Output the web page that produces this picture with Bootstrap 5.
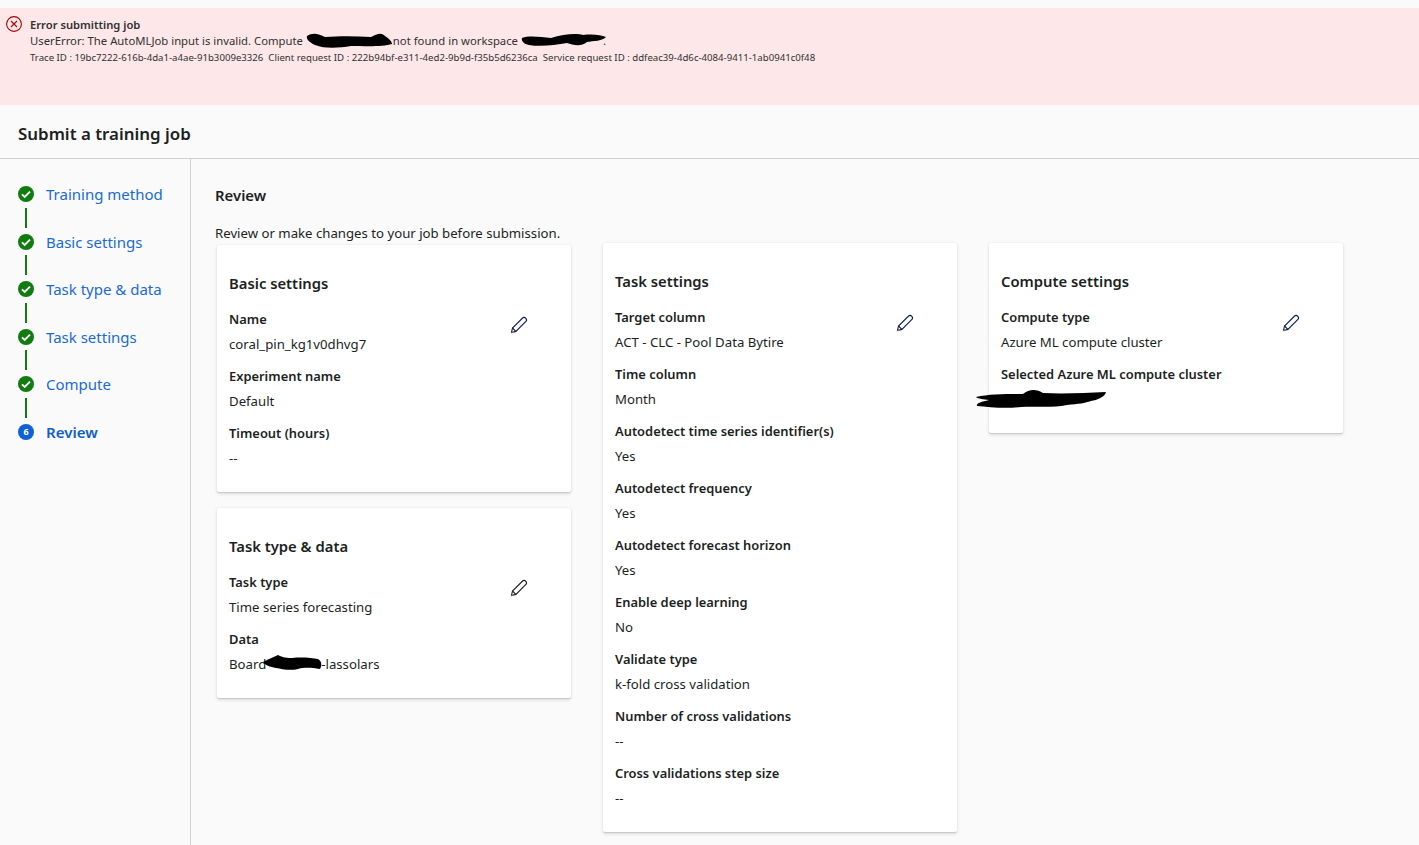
<!DOCTYPE html>
<html lang="en">
<head>
<meta charset="utf-8">
<title>Submit a training job</title>
<link href="https://cdn.jsdelivr.net/npm/bootstrap@5.3.0/dist/css/bootstrap.min.css" rel="stylesheet">
<style>
html,body{height:100%;overflow:hidden}
body{font-family:"Noto Sans","Open Sans",sans-serif;background:#fafafa;color:#201f1e;font-size:13.2px;line-height:20px}
.shell{height:845px;padding-top:8px}
.errbar{background:#fde7e9;height:97px;padding:9px 6px 0;gap:8px}
.errbar svg{flex:none}
.errbar>svg{margin-top:-1px}
.errtitle{font-size:11.2px;font-weight:600;line-height:16px;color:#323130}
.errmsg{font-size:11.3px;line-height:16px;color:#323130}
.errmeta{font-size:9.64px;line-height:18px;color:#323130;white-space:pre}
.scrib{position:relative;display:inline-block;height:1em}
.scrib svg{position:absolute;overflow:visible}
.pagehead{height:54px;border-bottom:1px solid #d2d0ce;padding:0 18px;font-size:16.9px;font-weight:600;color:#201f1e;line-height:57px}
.bodyrow{height:687px}
.stepper{width:191px;flex:none;border-right:1px solid #d2d0ce;padding:23.5px 18px 0}
.steprow{height:23.5px;gap:12px;font-size:15px}
.steprow a{color:#1a6ad4;text-decoration:none}
.steprow a.cur{font-weight:600;color:#0f5fc8;font-size:15.1px}
.stepline{width:2px;height:20px;background:#107c10;margin:2px 0 2px 7px}
.stepdot{width:16px;height:16px;border-radius:50%;background:#0f62d6;color:#fff;font-size:9px;font-weight:700;line-height:16px;text-align:center;flex:none}
.mainpane{padding:26px 24px 0}
.revtitle{font-size:14.9px;font-weight:600;line-height:20px;margin-bottom:18px}
.revtext{line-height:20px;margin-bottom:0}
.colset{gap:32px;padding-left:2px}
.colone{width:354px;gap:16px;margin-top:2px}
.sheet{width:354px;border:0;border-radius:2px;background:#fff;box-shadow:0 1.6px 3.6px rgba(0,0,0,.13),0 .3px .9px rgba(0,0,0,.11);padding:28px 12px 24px;color:#201f1e}
.sheethead{font-size:14.8px;font-weight:600;line-height:20px;margin-bottom:16px}
.fieldset{gap:12px}
.fname{font-weight:600;font-size:12.9px;line-height:20px;margin-bottom:5px}
.fval{line-height:20px;min-height:20px}
.penbox{position:absolute;top:69px;left:293px}
</style>
</head>
<body>
<div class="shell d-flex flex-column">
  <div class="errbar d-flex align-items-start">
    <svg width="16" height="16" viewBox="0 0 16 16" fill="none" stroke="#a80000"><circle cx="8" cy="8" r="7.4" stroke-width="1.1"/><path d="M5 5l6 6M11 5l-6 6" stroke-width="1.1"/></svg>
    <div>
      <div class="errtitle">Error submitting job</div>
      <div class="errmsg">UserError: The AutoMLJob input is invalid. Compute <span class="scrib" style="width:84px"><svg width="88" height="18" viewBox="0 0 88 18" style="left:-1px;top:-3px"><path d="M2 5C8 1 14 3 20 6C34 5 50 5 66 6C72 3 76 1 80 5C84 8 87 10 87 13C78 16 60 15 46 15C34 17 20 18 10 14C4 11 1 8 2 5Z" fill="#000"/></svg></span> not found in workspace <span class="scrib" style="width:82px"><svg width="86" height="16" viewBox="0 0 86 16" style="left:0;top:-2px"><path d="M1 6C8 3 20 5 30 6C42 2 56 1 62 3C72 2 80 3 85 5C82 9 72 9 66 10C60 15 52 13 46 11C34 13 20 15 8 13C3 12 0 9 1 6Z" fill="#000"/></svg></span>.</div>
      <div class="errmeta">Trace ID : 19bc7222-616b-4da1-a4ae-91b3009e3326  Client request ID : 222b94bf-e311-4ed2-9b9d-f35b5d6236ca  Service request ID : ddfeac39-4d6c-4084-9411-1ab0941c0f48</div>
    </div>
  </div>
  <div class="pagehead">Submit a training job</div>
  <div class="bodyrow d-flex">
    <nav class="stepper d-flex flex-column">
      <div class="steprow d-flex align-items-center"><svg width="16" height="16" viewBox="0 0 16 16"><circle cx="8" cy="8" r="8" fill="#107c10"/><path d="M4 8.4l2.7 2.6L12 5.6" fill="none" stroke="#fff" stroke-width="1.9"/></svg><a href="#">Training method</a></div>
      <div class="stepline"></div>
      <div class="steprow d-flex align-items-center"><svg width="16" height="16" viewBox="0 0 16 16"><circle cx="8" cy="8" r="8" fill="#107c10"/><path d="M4 8.4l2.7 2.6L12 5.6" fill="none" stroke="#fff" stroke-width="1.9"/></svg><a href="#">Basic settings</a></div>
      <div class="stepline"></div>
      <div class="steprow d-flex align-items-center"><svg width="16" height="16" viewBox="0 0 16 16"><circle cx="8" cy="8" r="8" fill="#107c10"/><path d="M4 8.4l2.7 2.6L12 5.6" fill="none" stroke="#fff" stroke-width="1.9"/></svg><a href="#">Task type &amp; data</a></div>
      <div class="stepline"></div>
      <div class="steprow d-flex align-items-center"><svg width="16" height="16" viewBox="0 0 16 16"><circle cx="8" cy="8" r="8" fill="#107c10"/><path d="M4 8.4l2.7 2.6L12 5.6" fill="none" stroke="#fff" stroke-width="1.9"/></svg><a href="#">Task settings</a></div>
      <div class="stepline"></div>
      <div class="steprow d-flex align-items-center"><svg width="16" height="16" viewBox="0 0 16 16"><circle cx="8" cy="8" r="8" fill="#107c10"/><path d="M4 8.4l2.7 2.6L12 5.6" fill="none" stroke="#fff" stroke-width="1.9"/></svg><a href="#">Compute</a></div>
      <div class="stepline"></div>
      <div class="steprow d-flex align-items-center"><span class="stepdot">6</span><a href="#" class="cur">Review</a></div>
    </nav>
    <main class="mainpane flex-grow-1">
      <div class="revtitle">Review</div>
      <p class="revtext">Review or make changes to your job before submission.</p>
      <div class="colset d-flex align-items-start">
        <div class="colone d-flex flex-column">
          <section class="card sheet position-relative">
            <div class="sheethead">Basic settings</div>
            <div class="penbox"><svg width="18" height="18" viewBox="0 0 18 18" fill="none" stroke="#0b1f4d" stroke-width="1.1"><path d="M1.5 16.5l1-4.5L12.6 2a2 2 0 0 1 3 0.2l.3.3a2 2 0 0 1 0 2.8L5.9 15.4z"/><path d="M2.5 12l3.4 3.4"/><path d="M1.5 16.5l2-.5" stroke="#d97a1a"/></svg></div>
            <div class="fieldset d-flex flex-column">
              <div><div class="fname">Name</div><div class="fval">coral_pin_kg1v0dhvg7</div></div>
              <div><div class="fname">Experiment name</div><div class="fval">Default</div></div>
              <div><div class="fname">Timeout (hours)</div><div class="fval">--</div></div>
            </div>
          </section>
          <section class="card sheet position-relative">
            <div class="sheethead">Task type &amp; data</div>
            <div class="penbox"><svg width="18" height="18" viewBox="0 0 18 18" fill="none" stroke="#1b1b1b" stroke-width="1.1"><path d="M1.5 16.5l1-4.5L12.6 2a2 2 0 0 1 3 0.2l.3.3a2 2 0 0 1 0 2.8L5.9 15.4z"/><path d="M2.5 12l3.4 3.4"/><path d="M1.5 16.5l2-.5" stroke="#d97a1a"/></svg></div>
            <div class="fieldset d-flex flex-column">
              <div><div class="fname">Task type</div><div class="fval">Time series forecasting</div></div>
              <div><div class="fname">Data</div><div class="fval">Board<span class="scrib" style="width:55px"><svg width="60" height="17" viewBox="0 0 60 17" style="left:-4px;top:-2px"><path d="M1 8C6 5 12 3 16 1C20 3 22 4 30 4C40 3 50 4 56 5C60 7 60 12 58 15C50 14 44 13 36 15C28 17 20 15 14 14C8 13 3 11 1 8Z" fill="#000"/></svg></span>-lassolars</div></div>
            </div>
          </section>
        </div>
        <section class="card sheet position-relative">
          <div class="sheethead">Task settings</div>
          <div class="penbox"><svg width="18" height="18" viewBox="0 0 18 18" fill="none" stroke="#0b1f4d" stroke-width="1.1"><path d="M1.5 16.5l1-4.5L12.6 2a2 2 0 0 1 3 0.2l.3.3a2 2 0 0 1 0 2.8L5.9 15.4z"/><path d="M2.5 12l3.4 3.4"/><path d="M1.5 16.5l2-.5" stroke="#d97a1a"/></svg></div>
          <div class="fieldset d-flex flex-column">
            <div><div class="fname">Target column</div><div class="fval">ACT - CLC - Pool Data Bytire</div></div>
            <div><div class="fname">Time column</div><div class="fval">Month</div></div>
            <div><div class="fname">Autodetect time series identifier(s)</div><div class="fval">Yes</div></div>
            <div><div class="fname">Autodetect frequency</div><div class="fval">Yes</div></div>
            <div><div class="fname">Autodetect forecast horizon</div><div class="fval">Yes</div></div>
            <div><div class="fname">Enable deep learning</div><div class="fval">No</div></div>
            <div><div class="fname">Validate type</div><div class="fval">k-fold cross validation</div></div>
            <div><div class="fname">Number of cross validations</div><div class="fval">--</div></div>
            <div><div class="fname">Cross validations step size</div><div class="fval">--</div></div>
          </div>
        </section>
        <section class="card sheet position-relative">
          <div class="sheethead">Compute settings</div>
          <div class="penbox"><svg width="18" height="18" viewBox="0 0 18 18" fill="none" stroke="#0b1f4d" stroke-width="1.1"><path d="M1.5 16.5l1-4.5L12.6 2a2 2 0 0 1 3 0.2l.3.3a2 2 0 0 1 0 2.8L5.9 15.4z"/><path d="M2.5 12l3.4 3.4"/><path d="M1.5 16.5l2-.5" stroke="#d97a1a"/></svg></div>
          <div class="fieldset d-flex flex-column">
            <div><div class="fname">Compute type</div><div class="fval">Azure ML compute cluster</div></div>
            <div><div class="fname">Selected Azure ML compute cluster</div><div class="fval"><span class="scrib" style="width:1px"><svg width="132" height="20" viewBox="0 0 132 20" style="left:-26px;top:-2px"><path d="M1 8C14 5 30 5 48 5C54 0 62 0 68 4C88 5 110 4 131 3C130 8 122 11 116 12C110 14 104 15 92 16C78 19 60 17 46 18C30 20 14 18 2 17C1 14 6 13 14 11C9 10 3 10 1 8Z" fill="#000"/></svg></span></div></div>
          </div>
        </section>
      </div>
    </main>
  </div>
</div>
<script src="https://cdn.jsdelivr.net/npm/bootstrap@5.3.0/dist/js/bootstrap.bundle.min.js"></script>
</body>
</html>
